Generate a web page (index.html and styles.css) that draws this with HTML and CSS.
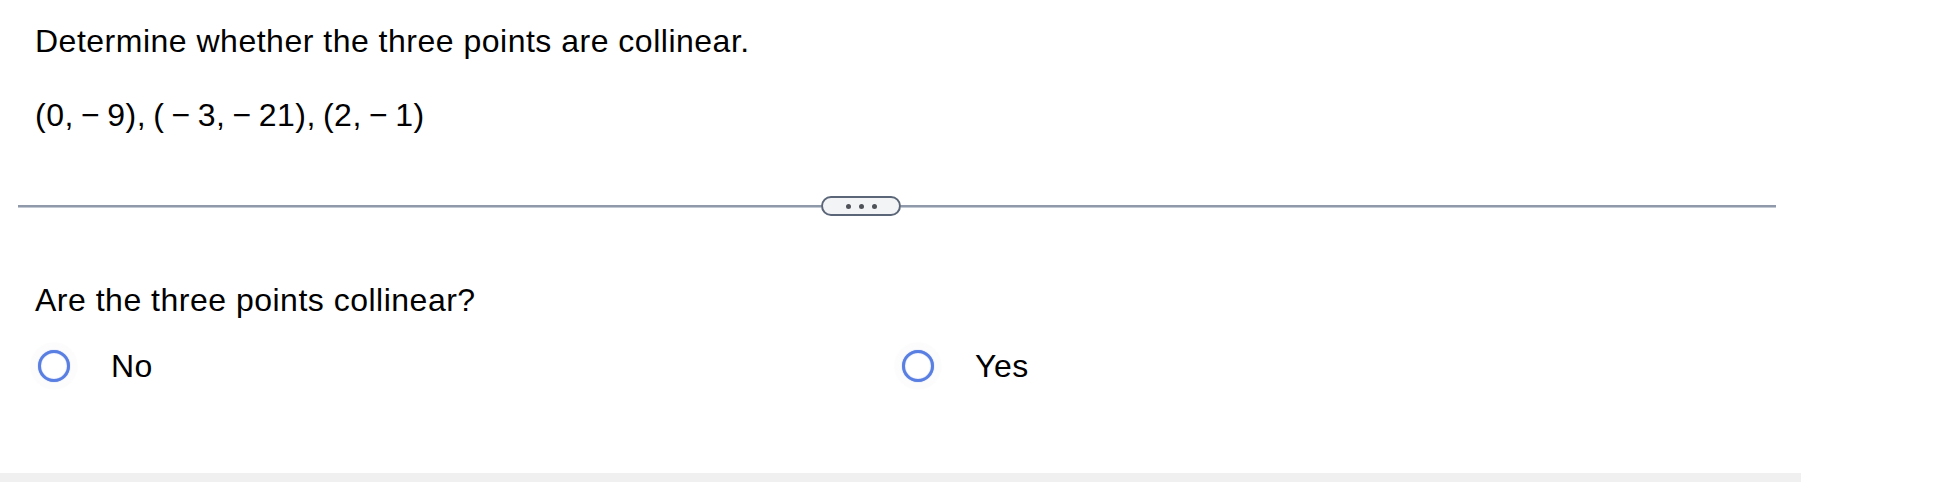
FILE: index.html
```html
<!DOCTYPE html>
<html lang="en">
<head>
<meta charset="utf-8">
<title>Collinear points</title>
<link rel="stylesheet" href="styles.css">
</head>
<body>
<div class="page">
  <section class="problem">
    <p class="prompt">Determine whether the three points are collinear.</p>
    <p class="points">(0, − 9), ( − 3, − 21), (2, − 1)</p>
  </section>

  <div class="divider">
    <span class="rule rule-left"></span>
    <span class="pill"><i class="dot"></i><i class="dot"></i><i class="dot"></i></span>
    <span class="rule rule-right"></span>
  </div>

  <section class="answer">
    <p class="question">Are the three points collinear?</p>
    <div class="options">
      <label class="option"><span class="radio"></span><span class="option-text">No</span></label>
      <label class="option"><span class="radio"></span><span class="option-text">Yes</span></label>
    </div>
  </section>

  <div class="footer-bar"></div>
</div>
</body>
</html>
```
FILE: styles.css
```css
html, body {
  margin: 0;
  padding: 0;
  background: #ffffff;
}

body {
  font-family: "Liberation Sans", Arial, Helvetica, sans-serif;
  font-size: 32px;
  letter-spacing: 0.5px;
  color: #000000;
  overflow: hidden;
}

.page {
  width: 1942px;
  height: 482px;
}

.problem {
  padding: 24px 0 0 35px;
}

.prompt,
.points,
.question {
  margin: 0;
  line-height: 34px;
}

.points {
  margin-top: 40px;
  word-spacing: -2.3px;
}

.divider {
  display: flex;
  align-items: center;
  width: 1758px;
  height: 20px;
  margin: 64px 0 0 18px;
}

.rule {
  height: 2px;
  background: #8f99aa;
  box-shadow: 0 1px 0 #c3c9d3;
}

.rule-left {
  width: 803px;
}

.rule-right {
  flex: 1;
}

.pill {
  box-sizing: border-box;
  width: 80px;
  height: 20px;
  border: 2px solid #5b6678;
  border-radius: 10px;
  background: #f3f4f6;
  display: flex;
  align-items: center;
  justify-content: center;
  gap: 8px;
}

.dot {
  width: 5px;
  height: 5px;
  border-radius: 50%;
  background: #4f5359;
}

.answer {
  padding: 67px 0 0 35px;
}

.options {
  display: grid;
  grid-template-columns: 864px 864px;
  margin-top: 32px;
  padding-left: 3px;
}

.option {
  display: flex;
  align-items: center;
  gap: 41px;
  height: 34px;
  line-height: 34px;
}

.radio {
  box-sizing: border-box;
  width: 32px;
  height: 32px;
  border: 3px solid #5a7fe2;
  border-radius: 50%;
  background: #ffffff;
  box-shadow: 0 0 1px rgba(90, 127, 226, 0.7), inset 0 0 1px rgba(90, 127, 226, 0.7), 0 0 0 8px rgba(0, 0, 0, 0.012);
}

.footer-bar {
  width: 1801px;
  height: 20px;
  margin-top: 90px;
  background: #f0f0f0;
}
```
